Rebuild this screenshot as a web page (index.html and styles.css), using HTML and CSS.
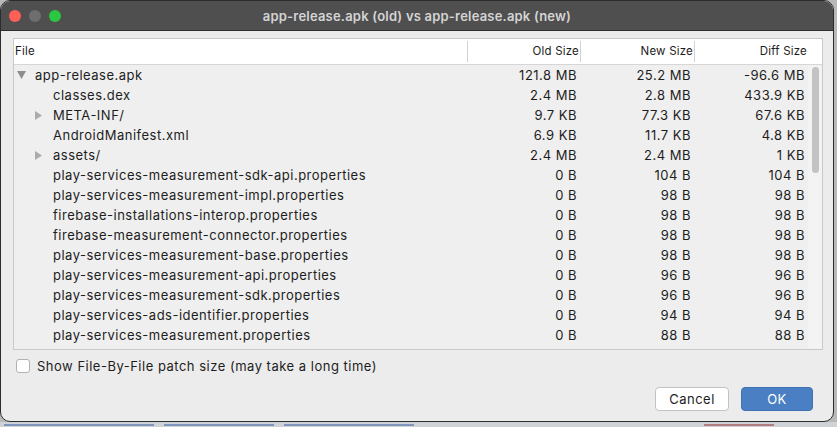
FILE: index.html
```html
<!DOCTYPE html>
<html lang="en">
<head>
  <meta charset="UTF-8" />
  <meta name="viewport" content="width=device-width, initial-scale=1.0" />
  <title>APK diff</title>
  <link rel="stylesheet" href="styles.css">
</head>
<body>
  <!-- Ventana del diálogo -->
  <div class="window">
    <div class="titlebar">
      <div class="lights">
        <span class="light red"></span>
        <span class="light gray"></span>
        <span class="light green"></span>
      </div>
      <div class="title">app-release.apk (old) vs app-release.apk (new)</div>
      <div></div>
    </div>

    <div class="content">
      <!-- Tabla de archivos -->
      <div class="table">
        <div class="head">
          <div class="hcell file">File</div>
          <div class="hcell">Old Size</div>
          <div class="hcell">New Size</div>
          <div class="hcell">Diff Size</div>
          <div></div>
        </div>
        <div class="body">
          <div class="rows">
            <div class="row">
              <div class="name depth0"><span class="arrow"><svg width="9" height="8" viewBox="0 0 9 8"><path d="M0 0H9L4.5 8Z" fill="#8e8e8e"/></svg></span>app-release.apk</div>
              <div class="num">121.8 MB</div><div class="num">25.2 MB</div><div class="num">-96.6 MB</div>
            </div>
            <div class="row">
              <div class="name depth1"><span class="arrow"></span>classes.dex</div>
              <div class="num">2.4 MB</div><div class="num">2.8 MB</div><div class="num">433.9 KB</div>
            </div>
            <div class="row">
              <div class="name depth1"><span class="arrow"><svg width="7" height="9" viewBox="0 0 7 9"><path d="M0 0V9L7 4.5Z" fill="#ababab"/></svg></span>META-INF/</div>
              <div class="num">9.7 KB</div><div class="num">77.3 KB</div><div class="num">67.6 KB</div>
            </div>
            <div class="row">
              <div class="name depth1"><span class="arrow"></span>AndroidManifest.xml</div>
              <div class="num">6.9 KB</div><div class="num">11.7 KB</div><div class="num">4.8 KB</div>
            </div>
            <div class="row">
              <div class="name depth1"><span class="arrow"><svg width="7" height="9" viewBox="0 0 7 9"><path d="M0 0V9L7 4.5Z" fill="#ababab"/></svg></span>assets/</div>
              <div class="num">2.4 MB</div><div class="num">2.4 MB</div><div class="num">1 KB</div>
            </div>
            <div class="row">
              <div class="name depth1"><span class="arrow"></span>play-services-measurement-sdk-api.properties</div>
              <div class="num">0 B</div><div class="num">104 B</div><div class="num">104 B</div>
            </div>
            <div class="row">
              <div class="name depth1"><span class="arrow"></span>play-services-measurement-impl.properties</div>
              <div class="num">0 B</div><div class="num">98 B</div><div class="num">98 B</div>
            </div>
            <div class="row">
              <div class="name depth1"><span class="arrow"></span>firebase-installations-interop.properties</div>
              <div class="num">0 B</div><div class="num">98 B</div><div class="num">98 B</div>
            </div>
            <div class="row">
              <div class="name depth1"><span class="arrow"></span>firebase-measurement-connector.properties</div>
              <div class="num">0 B</div><div class="num">98 B</div><div class="num">98 B</div>
            </div>
            <div class="row">
              <div class="name depth1"><span class="arrow"></span>play-services-measurement-base.properties</div>
              <div class="num">0 B</div><div class="num">98 B</div><div class="num">98 B</div>
            </div>
            <div class="row">
              <div class="name depth1"><span class="arrow"></span>play-services-measurement-api.properties</div>
              <div class="num">0 B</div><div class="num">96 B</div><div class="num">96 B</div>
            </div>
            <div class="row">
              <div class="name depth1"><span class="arrow"></span>play-services-measurement-sdk.properties</div>
              <div class="num">0 B</div><div class="num">96 B</div><div class="num">96 B</div>
            </div>
            <div class="row">
              <div class="name depth1"><span class="arrow"></span>play-services-ads-identifier.properties</div>
              <div class="num">0 B</div><div class="num">94 B</div><div class="num">94 B</div>
            </div>
            <div class="row">
              <div class="name depth1"><span class="arrow"></span>play-services-measurement.properties</div>
              <div class="num">0 B</div><div class="num">88 B</div><div class="num">88 B</div>
            </div>
          </div>
          <!-- Barra de desplazamiento -->
          <div class="scrollbar"><div class="thumb"></div></div>
        </div>
      </div>

      <label class="check">
        <span class="box"></span>
        Show File-By-File patch size (may take a long time)
      </label>

      <div class="actions">
        <button class="btn">Cancel</button>
        <button class="btn primary">OK</button>
      </div>
    </div>
  </div>

  <!-- Lo que asoma detrás de la ventana -->
  <div class="behind">
    <span class="smudge blue" style="width: 150px"></span>
    <span class="smudge blue" style="width: 110px"></span>
    <span class="smudge blue" style="width: 130px"></span>
    <span class="smudge red" style="width: 70px"></span>
  </div>
</body>
</html>
```

FILE: styles.css
```css
/* ===== General ===== */
body {
  margin: 0;
  background: #b9b9b9;
  font-family: Inter, "Liberation Sans", Arial, sans-serif;
  color: #1d1d1d;
  overflow: hidden;
  height: 427px;
  display: flex;
  flex-direction: column;
}

/* ===== Ventana ===== */
.window {
  width: 834px;
  height: 422px;
  box-sizing: border-box;
  border: 1px solid #2c2c2c;
  border-radius: 10px;
  overflow: hidden;
  background: #ececec;
  display: flex;
  flex-direction: column;
  flex-shrink: 0;
}
.titlebar {
  height: 29px;
  background: #4f4f4f;
  border-bottom: 1px solid #2e2e2e;
  display: grid;
  grid-template-columns: 1fr auto 1fr;
  align-items: center;
}
.lights {
  display: flex;
  gap: 8px;
  padding-left: 8px;
  padding-top: 1px;
}
.light {
  width: 12px;
  height: 12px;
  border-radius: 50%;
}
.red { background: #fe5f57; }
.gray { background: #6e6e6e; }
.green { background: #2ac840; }
.title {
  color: #d4d4d4;
  font-weight: 600;
  font-size: 13px;
  letter-spacing: 0.2px;
}

/* ===== Contenido ===== */
.content {
  flex: 1;
  display: flex;
  flex-direction: column;
  padding: 7px 10px 0 12px;
}
.table {
  border: 1px solid #c9c9c9;
  background: #efefef;
}
.head {
  display: grid;
  grid-template-columns: 453px 113px 114px 114px 1fr;
  height: 25px;
  background: #fff;
  border-bottom: 1px solid #d6d6d6;
  font-size: 11.5px;
  letter-spacing: 0.2px;
}
.hcell {
  text-align: right;
  padding-right: 1px;
  margin: 2px 0;
  line-height: 21px;
  border-left: 1px solid #d2d2d2;
}
.hcell.file {
  text-align: left;
  padding-left: 1px;
  border-left: none;
}
.body {
  display: flex;
  height: 284px;
}
.rows {
  width: 794px;
}
.row {
  display: grid;
  grid-template-columns: 453px 113px 114px 114px;
  height: 20px;
  line-height: 20px;
  font-size: 13px;
  letter-spacing: 0.5px;
  white-space: nowrap;
}
.name {
  display: flex;
  align-items: center;
}
.depth0 { padding-left: 3px; }
.depth1 { padding-left: 21px; }
.arrow {
  width: 18px;
  display: flex;
  align-items: center;
}
.num {
  text-align: right;
  padding-right: 3px;
}
.scrollbar {
  flex: 1;
  background: #f3f3f3;
}
.thumb {
  width: 7px;
  height: 106px;
  margin: 2px 0 0 4px;
  background: #c3c3c3;
  border-radius: 4px;
}

/* ===== Casilla ===== */
.check {
  display: flex;
  align-items: center;
  gap: 7px;
  margin: 8px 0 0 3px;
  font-size: 13px;
  letter-spacing: 0.5px;
  height: 16px;
}
.box {
  width: 12px;
  height: 12px;
  background: #fff;
  border: 1px solid #b2b2b2;
  border-radius: 3px;
}

/* ===== Botones ===== */
.actions {
  display: flex;
  justify-content: flex-end;
  gap: 12px;
  margin-top: 13px;
  padding-right: 10px;
}
.btn {
  height: 24px;
  width: 74px;
  font-family: inherit;
  font-size: 13px;
  letter-spacing: 0.5px;
  border-radius: 4px;
  border: 1px solid #c2c2c2;
  background: #fff;
  color: #1d1d1d;
  padding: 0;
}
.btn.primary {
  width: 72px;
  background: #4a80c3;
  border-color: #3f72b2;
  color: #fff;
}

/* ===== Fondo detrás ===== */
.behind {
  height: 5px;
  display: flex;
  gap: 10px;
  padding: 2px 0 0 4px;
  box-sizing: border-box;
  background: #cfd3d8;
}
.smudge {
  height: 2px;
  opacity: 0.55;
}
.smudge.blue { background: #3a64a0; }
.smudge.red { background: #9a3a3a; margin-left: 280px; }
```
